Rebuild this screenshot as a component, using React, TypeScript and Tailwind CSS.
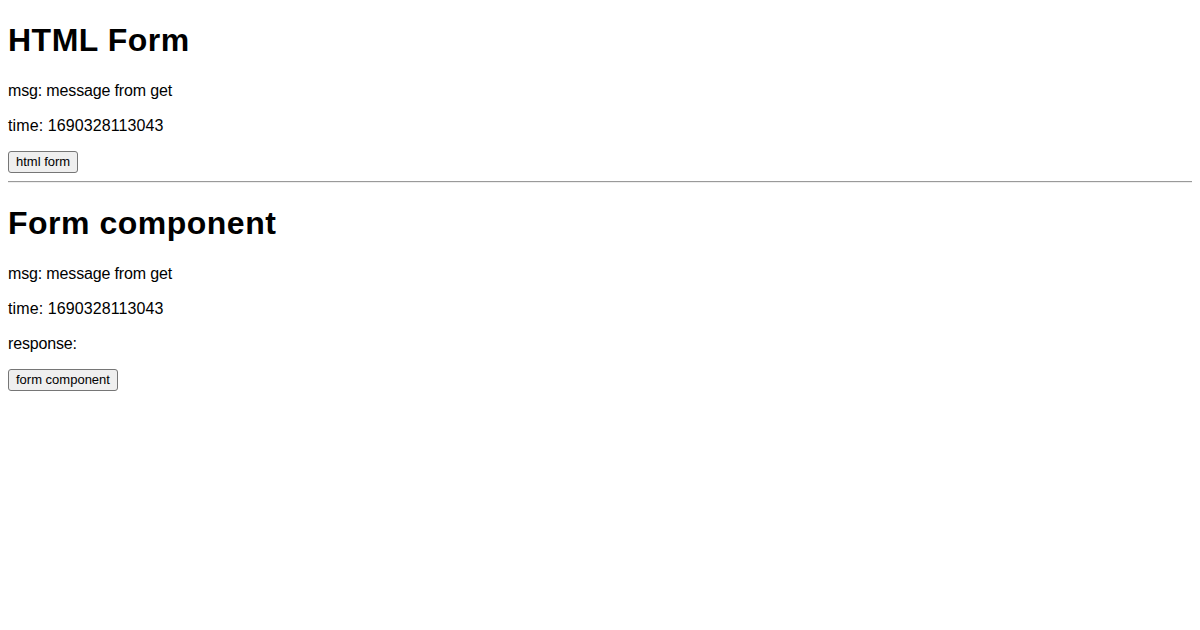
import React from 'react';

const Btn = ({ children }: { children: React.ReactNode }) => (
    <button className="border border-[#767676] bg-[#efefef] rounded-[3px] px-[7px] py-[2px] text-[13px] leading-[16px] text-black font-['Liberation_Sans',Arial,sans-serif]">
        {children}
    </button>
);

export default function App() {
    return (
        <div className="m-2 text-black text-base font-['Liberation_Sans',Arial,sans-serif]">
            <h1 className="text-[32px] font-bold my-[21.44px] leading-[38px] tracking-[0.5px]">HTML Form</h1>
            <p className="my-4 leading-[19px] tracking-[-0.15px]">msg: message from get</p>
            <p className="my-4 leading-[19px] tracking-[0.1px]">time: 1690328113043</p>
            <form className="flex items-start">
                <Btn>html form</Btn>
            </form>
            <hr className="my-2 h-0 border-t border-b border-t-[#9a9a9a] border-b-[#eeeeee]" />
            <h1 className="text-[32px] font-bold my-[21.44px] leading-[38px] tracking-[0.5px]">Form component</h1>
            <p className="my-4 leading-[19px] tracking-[-0.15px]">msg: message from get</p>
            <p className="my-4 leading-[19px] tracking-[0.1px]">time: 1690328113043</p>
            <p className="my-4 leading-[19px] tracking-[-0.15px]">response: </p>
            <form className="flex items-start">
                <Btn>form component</Btn>
            </form>
        </div>
    );
}
